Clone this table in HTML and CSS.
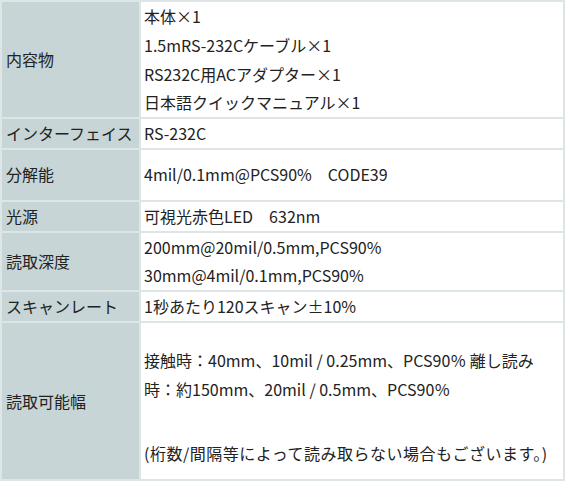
FILE: index.html
```
<!DOCTYPE html>
<html lang="ja">
<head>
<meta charset="utf-8">
<link rel="stylesheet" href="styles.css">
</head>
<body>
<table class="spec">
  <tr>
    <th>内容物</th>
    <td>本体×1<br>1.5mRS-232Cケーブル×1<br>RS232C用ACアダプター×1<br>日本語クイックマニュアル×1</td>
  </tr>
  <tr>
    <th>インターフェイス</th>
    <td>RS-232C</td>
  </tr>
  <tr class="tall">
    <th>分解能</th>
    <td>4mil/0.1mm@PCS90%　CODE39</td>
  </tr>
  <tr>
    <th>光源</th>
    <td>可視光赤色LED　632nm</td>
  </tr>
  <tr>
    <th>読取深度</th>
    <td>200mm@20mil/0.5mm,PCS90%<br>30mm@4mil/0.1mm,PCS90%</td>
  </tr>
  <tr>
    <th>スキャンレート</th>
    <td>1秒あたり120スキャン±10%</td>
  </tr>
  <tr>
    <th>読取可能幅</th>
    <td class="width-cell">
      <p class="para">接触時：40mm、10mil / 0.25mm、PCS90％ 離し読み時：約150mm、20mil / 0.5mm、PCS90％</p>
      <p class="para note">(桁数/間隔等によって読み取らない場合もございます。)</p>
    </td>
  </tr>
</table>
</body>
</html>
```
FILE: styles.css
```
html, body {
  margin: 0;
  padding: 0;
  background: #ffffff;
}
.spec {
  width: 565px;
  border-collapse: separate;
  border-spacing: 2px;
  background: #dde5e7;
  font-family: "Noto Sans CJK JP", "Noto Sans", sans-serif;
  font-size: 16px;
  line-height: 28.75px;
  color: #222222;
  table-layout: fixed;
}
.spec th {
  width: 133px;
  background: #c7d5d7;
  font-weight: normal;
  text-align: left;
  vertical-align: middle;
  padding: 0 0 0 4px;
  white-space: nowrap;
}
.spec td {
  background: #ffffff;
  vertical-align: middle;
  padding: 0 1px 0 3px;
}
.tall td, .tall th {
  height: 50px;
}
.width-cell {
  padding-top: 23px !important;
  padding-bottom: 11px !important;
}
.para {
  margin: 0;
}
.note {
  margin-top: 36px;
  letter-spacing: 0.5px;
  white-space: nowrap;
}
```
